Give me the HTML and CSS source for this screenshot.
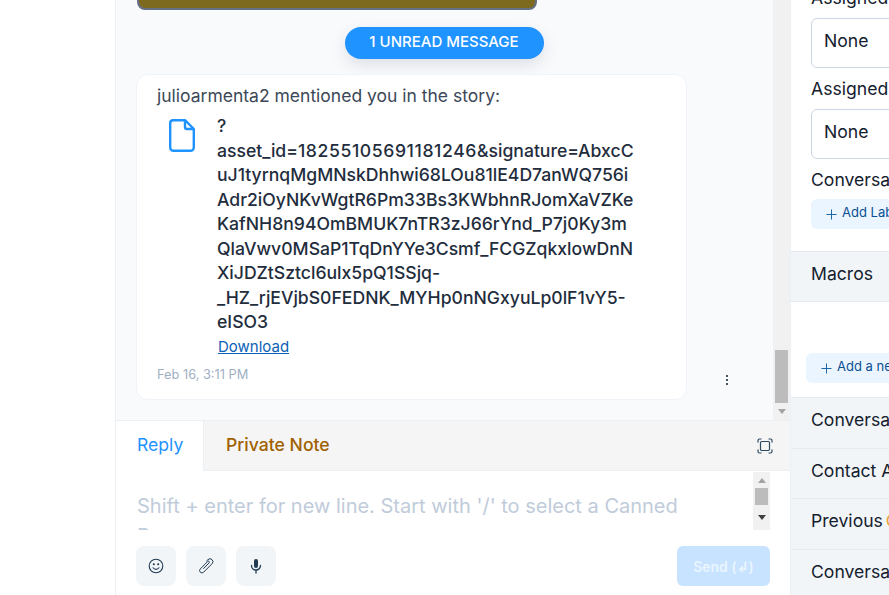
FILE: index.html
```html
<!DOCTYPE html>
<html lang="en">
<head>
    <meta charset="UTF-8">
    <title>Conversation</title>
    <link rel="stylesheet" href="styles.css">
</head>
<body>
    <div class="nav-space"></div>

    <main class="conversation">
        <div class="messages-wrap">
            <div class="messages">
                <div class="story-image"></div>
                <div class="unread-row"><span class="unread-pill">1 UNREAD MESSAGE</span></div>
                <div class="message-row">
                    <div class="bubble">
                        <p class="mention">julioarmenta2 mentioned you in the story:</p>
                        <div class="file">
                            <svg class="file-icon" viewBox="0 0 26 33" fill="none" stroke="#1f93ff" stroke-width="2.400" stroke-linejoin="round">
                                <path d="M4 1.200h12L24.800 10V28.500a3.300 3.300 0 0 1-3.300 3.300H4.500a3.300 3.300 0 0 1-3.300-3.300V4A3 3 0 0 1 4 1.200z"/>
                                <path d="M16 1.200V8a2 2 0 0 0 2 2h6.800"/>
                            </svg>
                            <div class="file-body">
                                <div class="file-name">?<br>asset_id=<span class="digits">18255105691181246</span>&amp;signature=AbxcC<br>uJ1tyrnqMgMNskDhhwi68LOu81lE4D7anWQ756i<br>Adr2iOyNKvWgtR6Pm33Bs3KWbhnRJomXaVZKe<br>KafNH8n94OmBMUK7nTR3zJ66rYnd_P7j0Ky3m<br>QlaVwv0MSaP1TqDnYYe3Csmf_FCGZqkxlowDnN<br>XiJDZtSztcl6ulx5pQ1SSjq-<br>_HZ_rjEVjbS0FEDNK_MYHp0nNGxyuLp0lF1vY5-<br>eISO3</div>
                                <a class="download" href="#">Download</a>
                            </div>
                        </div>
                        <div class="time">Feb 16, 3:11 PM</div>
                    </div>
                    <svg class="more" viewBox="0 0 4 12" fill="#1f2d3d"><circle cx="2" cy="2" r="1.100"/><circle cx="2" cy="6" r="1.100"/><circle cx="2" cy="10" r="1.100"/></svg>
                </div>
            </div>
            <div class="scrollbar">
                <div class="thumb"></div>
                <div class="arrow-down"></div>
            </div>
        </div>

        <section class="reply-box">
            <div class="tabs">
                <div class="tab tab-reply">Reply</div>
                <div class="tab tab-note">Private Note</div>
                <div class="tab-fill">
                    <svg class="expand" viewBox="0 0 16 16" fill="none" stroke="#2f4a63" stroke-width="1.200">
                        <rect x="3.500" y="3.500" width="9" height="9" rx="1.200"/>
                        <path d="M1 4.500V2.500A1.500 1.500 0 0 1 2.500 1h2M11.500 1h2A1.500 1.500 0 0 1 15 2.500v2M15 11.500v2a1.500 1.500 0 0 1-1.500 1.500h-2M4.500 15h-2A1.500 1.500 0 0 1 1 13.500v-2"/>
                    </svg>
                </div>
            </div>
            <div class="editor">
                <div class="placeholder">Shift + enter for new line. Start with '/' to select a Canned Response</div>
                <div class="editor-scroll">
                    <div class="mini-up"></div>
                    <div class="mini-thumb"></div>
                    <div class="mini-down"></div>
                </div>
            </div>
            <div class="actions">
                <button class="icon-btn" aria-label="Emoji">
                    <svg viewBox="0 0 16 16" fill="none" stroke="#1f3a52" stroke-width="1.100"><circle cx="8" cy="8" r="6.800"/><path d="M5 9.800c.8 1.100 1.800 1.600 3 1.600s2.200-.5 3-1.600" stroke-linecap="round"/><circle cx="5.800" cy="6.300" r=".5" fill="#1f3a52"/><circle cx="10.200" cy="6.300" r=".5" fill="#1f3a52"/></svg>
                </button>
                <button class="icon-btn" aria-label="Attach">
                    <svg viewBox="0 0 16 16" fill="none" stroke="#1f3a52" stroke-width="1" stroke-linecap="round"><path d="M5.600 10.500 11.200 4.800a1 1 0 0 0-1.400-1.400L2.300 10.900a2.300 2.300 0 0 0 3.300 3.300l8.500-8.500a2.900 2.900 0 0 0-4.100-4.100L8.600 2.900"/></svg>
                </button>
                <button class="icon-btn" aria-label="Record">
                    <svg viewBox="0 0 16 16" fill="none" stroke="#1f3a52" stroke-width="1.300" stroke-linecap="round"><rect x="6" y="1" width="4" height="9" rx="2" fill="#1f3a52" stroke="none"/><path d="M3.500 7.500a4.500 4.500 0 0 0 9 0M8 12v3"/></svg>
                </button>
                <button class="send-btn">Send (↲)</button>
            </div>
        </section>
    </main>

    <aside class="sidebar">
        <div class="side-top">
            <div class="side-label">Assigned Agent</div>
            <div class="side-select">None</div>
            <div class="side-label">Assigned Team</div>
            <div class="side-select">None</div>
            <div class="side-label">Conversation Labels</div>
            <button class="add-btn">
                <svg class="plus" viewBox="0 0 12 12" fill="none" stroke="#0b5a9e" stroke-width="1"><path d="M6 .5v11M.5 6h11"/></svg>
                <span class="add-text">Add Labels</span>
            </button>
        </div>
        <div class="side-row">Macros</div>
        <div class="macro-body">
            <button class="add-btn">
                <svg class="plus" viewBox="0 0 12 12" fill="none" stroke="#0b5a9e" stroke-width="1"><path d="M6 .5v11M.5 6h11"/></svg>
                <span class="add-text">Add a new macro</span>
            </button>
        </div>
        <div class="side-row">Conversation Actions</div>
        <div class="side-row">Contact Attributes</div>
        <div class="side-row">Previous <span class="count">Conversations</span></div>
        <div class="side-row">Conversation Info</div>
    </aside>
</body>
</html>
```

FILE: styles.css
```css
* { box-sizing: border-box; }

body {
    margin: 0;
    width: 889px;
    height: 595px;
    display: flex;
    overflow: hidden;
    font-family: Inter, "Noto Sans", sans-serif;
    background-color: #fff;
    color: #1f2d3d;
}

.nav-space {
    width: 116px;
    flex-shrink: 0;
    background-color: #fff;
    border-right: 1px solid #ebf0f5;
}

.conversation {
    width: 675px;
    flex-shrink: 0;
    display: flex;
    flex-direction: column;
    border-right: 1px solid #ebf0f5;
}

/* messages */
.messages-wrap {
    height: 420px;
    display: flex;
    background-color: #f9fafc;
}
.messages {
    flex: 1;
    display: flex;
    flex-direction: column;
    justify-content: flex-end;
    overflow: hidden;
    padding: 0 0 20px 20px;
}
.story-image {
    width: 400px;
    height: 30px;
    margin-left: 1px;
    flex-shrink: 0;
    background-color: #7d6a1f;
    border: 2px solid #667085;
    border-radius: 8px;
}
.unread-row {
    width: 656px;
    margin-left: -20px;
    padding-top: 17px;
    padding-bottom: 15px;
    display: flex;
    justify-content: center;
}
.unread-pill {
    width: 199px;
    height: 32px;
    line-height: 30px;
    text-align: center;
    border-radius: 16px;
    background-color: #1f93ff;
    color: #fff;
    font-size: 15px;
    font-weight: 500;
    box-shadow: 0 6px 16px rgba(52, 72, 94, 0.14);
}
.message-row {
    display: flex;
    align-items: flex-end;
}
.bubble {
    width: 551px;
    height: 326px;
    background-color: #fff;
    border: 1px solid #f0f4f8;
    border-radius: 12px;
    padding: 10px 20px 0;
}
.mention {
    margin: 0;
    font-size: 17.500px;
    line-height: 21px;
    color: #3c4858;
}
.file {
    display: flex;
    margin-top: 8px;
}
.file-icon {
    width: 26px;
    height: 33px;
    margin-left: 12px;
    margin-top: 5px;
    flex-shrink: 0;
}
.file-body {
    width: 430px;
    margin-left: 22px;
}
.file-name {
    font-size: 17.600px;
    font-weight: 500;
    line-height: 24.500px;
    white-space: nowrap;
    color: #1f2d3d;
}
.digits {
    letter-spacing: 0.6px;
}
.download {
    display: block;
    margin-left: 1px;
    font-size: 15px;
    line-height: 24px;
    color: #0b61b5;
}
.time {
    margin-top: 8px;
    font-size: 12.800px;
    color: #9fb0c3;
}
.more {
    width: 4px;
    height: 12px;
    margin-left: 38px;
    margin-bottom: 14px;
}
.scrollbar {
    width: 17px;
    display: flex;
    flex-direction: column;
    justify-content: flex-end;
    align-items: center;
    background-color: #f1f1f1;
}
.thumb {
    width: 13px;
    height: 53px;
    background-color: #bcbcbc;
}
.arrow-down {
    margin: 6px 0 6px;
    border-left: 4px solid transparent;
    border-right: 4px solid transparent;
    border-top: 5px solid #a3a3a3;
}

/* reply box */
.reply-box {
    flex: 1;
    background-color: #fff;
    display: flex;
    flex-direction: column;
    min-height: 0;
}
.tabs {
    display: flex;
    height: 51px;
    flex-shrink: 0;
    background-color: #f5f5f5;
    border-top: 1px solid #ebf0f5;
    border-bottom: 1px solid #ebf0f5;
}
.tab {
    font-size: 17.600px;
    font-weight: 500;
    line-height: 47px;
}
.tab-reply {
    width: 88px;
    padding-left: 21px;
    color: #1f93ff;
    font-weight: 400;
    background-color: #fff;
    border-right: 1px solid #ebf0f5;
    margin-bottom: -1px;
}
.tab-note {
    padding-left: 22px;
    color: #a06100;
}
.tab-fill {
    flex: 1;
    display: flex;
    justify-content: flex-end;
    align-items: center;
    padding-right: 17px;
}
.expand {
    width: 16px;
    height: 16px;
}
.editor {
    height: 60px;
    display: flex;
    flex-shrink: 0;
    padding-left: 21px;
    padding-right: 20px;
}
.placeholder {
    width: 600px;
    height: 59px;
    padding-top: 20px;
    overflow: hidden;
    font-size: 20px;
    line-height: 30px;
    color: #c0ccda;
}
.editor-scroll {
    width: 17px;
    height: 58px;
    margin-top: 1px;
    margin-left: 16px;
    display: flex;
    flex-direction: column;
    align-items: center;
    background-color: #f1f1f1;
}
.mini-up {
    margin-top: 6px;
    border-left: 4px solid transparent;
    border-right: 4px solid transparent;
    border-bottom: 5px solid #a3a3a3;
}
.mini-thumb {
    width: 13px;
    height: 17px;
    margin-top: 5px;
    background-color: #bcbcbc;
}
.mini-down {
    margin-top: 10px;
    border-left: 4px solid transparent;
    border-right: 4px solid transparent;
    border-top: 5px solid #404040;
}
.actions {
    display: flex;
    gap: 10px;
    padding: 15px 20px 0 20px;
}
.icon-btn {
    width: 40px;
    height: 40px;
    padding: 0;
    border: none;
    border-radius: 8px;
    background-color: #f1f5f8;
    display: flex;
    align-items: center;
    justify-content: center;
}
.icon-btn svg {
    width: 16px;
    height: 16px;
}
.send-btn {
    width: 93px;
    height: 40px;
    margin-left: auto;
    border: none;
    border-radius: 6px;
    background-color: #c7e3ff;
    color: #eaf5ff;
    font-family: inherit;
    font-size: 14px;
    font-weight: 600;
}

/* sidebar */
.sidebar {
    width: 98px;
    flex-shrink: 0;
    overflow: hidden;
    white-space: nowrap;
    background-color: #fff;
    color: #14202e;
}
.side-top {
    width: 220px;
    height: 264px;
    margin-top: -13px;
    padding-left: 20px;
}
.side-label {
    font-size: 17.600px;
    line-height: 22px;
}
.side-select {
    width: 200px;
    height: 50px;
    margin: 9px 0 10px;
    padding-left: 12px;
    line-height: 44px;
    font-size: 17.600px;
    border: 1px solid #cbd8e4;
    border-radius: 6px;
}
.add-btn {
    display: flex;
    align-items: center;
    gap: 5px;
    width: 180px;
    height: 30px;
    margin-top: 8px;
    padding: 0 0 0 15px;
    border: none;
    border-radius: 6px;
    background-color: #ebf5ff;
    color: #0b4f94;
    font-family: inherit;
    font-size: 13px;
    white-space: nowrap;
}
.add-text {
    margin-bottom: 5px;
}
.plus {
    width: 11px;
    height: 11px;
    flex-shrink: 0;
}
.side-row {
    width: 300px;
    height: 50.700px;
    padding-left: 20px;
    line-height: 43px;
    font-size: 17.600px;
    background-color: #f1f5f8;
    border-bottom: 1px solid #e4eaf0;
}
.side-top + .side-row {
    height: 51px;
    border-top: 1px solid #e4eaf0;
}
.count {
    margin-left: -2px;
    color: #e8a33d;
}
.macro-body {
    height: 96px;
    padding: 43px 0 0 15px;
    border-bottom: 1px solid #e4eaf0;
}
```
